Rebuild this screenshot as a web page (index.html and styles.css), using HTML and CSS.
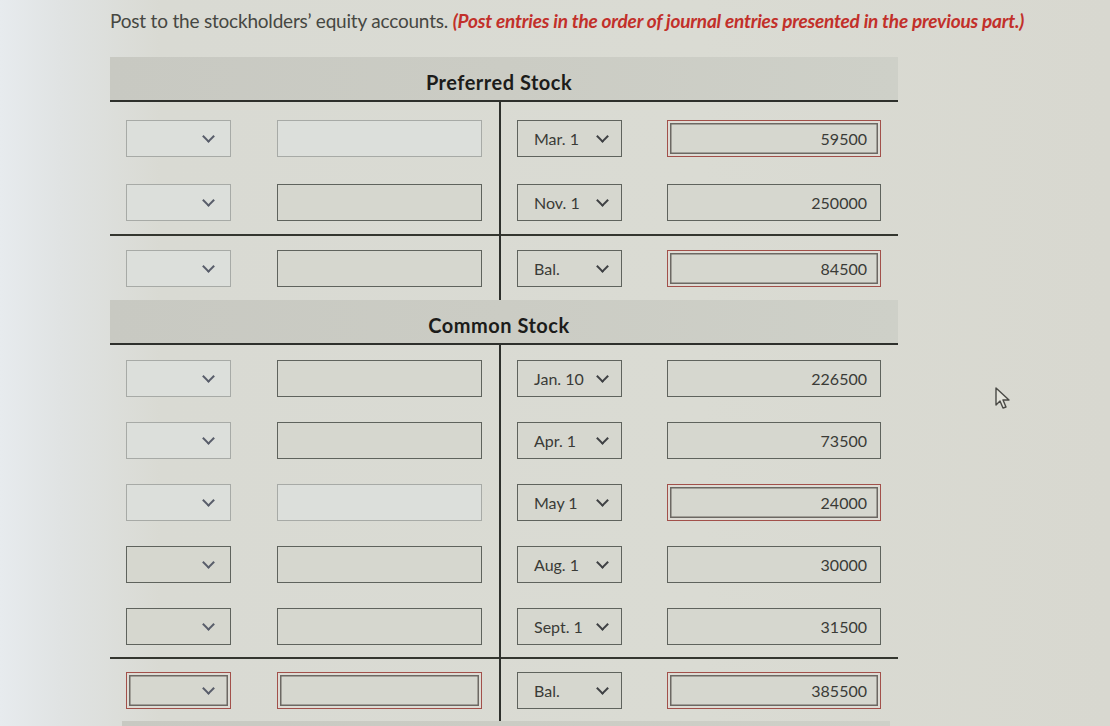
FILE: index.html
```html
<!DOCTYPE html>
<html>
<head>
<meta charset="utf-8">
<link rel="stylesheet" href="styles.css">
</head>
<body>
<div class="page">
  <p class="prompt">Post to the stockholders’ equity accounts. <span class="note">(Post entries in the order of journal entries presented in the previous part.)</span></p>

  <div class="ledger">
    <div class="head">Preferred Stock</div>
    <div class="body pref">
      <div class="row">
        <div class="half l"><div class="sel light"><span></span><i class="chev"></i></div><div class="inp light"></div></div>
        <div class="half r"><div class="sel"><span>Mar. 1</span><i class="chev"></i></div><div class="inp amt red">59500</div></div>
      </div>
      <div class="row">
        <div class="half l"><div class="sel light"><span></span><i class="chev"></i></div><div class="inp"></div></div>
        <div class="half r"><div class="sel"><span>Nov. 1</span><i class="chev"></i></div><div class="inp amt">250000</div></div>
      </div>
      <div class="rule"></div>
      <div class="row">
        <div class="half l"><div class="sel light"><span></span><i class="chev"></i></div><div class="inp"></div></div>
        <div class="half r"><div class="sel"><span>Bal.</span><i class="chev"></i></div><div class="inp amt red">84500</div></div>
      </div>
    </div>

    <div class="head">Common Stock</div>
    <div class="body common">
      <div class="row">
        <div class="half l"><div class="sel light"><span></span><i class="chev"></i></div><div class="inp"></div></div>
        <div class="half r"><div class="sel"><span>Jan. 10</span><i class="chev"></i></div><div class="inp amt">226500</div></div>
      </div>
      <div class="row">
        <div class="half l"><div class="sel light"><span></span><i class="chev"></i></div><div class="inp"></div></div>
        <div class="half r"><div class="sel"><span>Apr. 1</span><i class="chev"></i></div><div class="inp amt">73500</div></div>
      </div>
      <div class="row">
        <div class="half l"><div class="sel light"><span></span><i class="chev"></i></div><div class="inp light"></div></div>
        <div class="half r"><div class="sel"><span>May 1</span><i class="chev"></i></div><div class="inp amt red">24000</div></div>
      </div>
      <div class="row">
        <div class="half l"><div class="sel"><span></span><i class="chev"></i></div><div class="inp"></div></div>
        <div class="half r"><div class="sel"><span>Aug. 1</span><i class="chev"></i></div><div class="inp amt">30000</div></div>
      </div>
      <div class="row">
        <div class="half l"><div class="sel"><span></span><i class="chev"></i></div><div class="inp"></div></div>
        <div class="half r"><div class="sel"><span>Sept. 1</span><i class="chev"></i></div><div class="inp amt">31500</div></div>
      </div>
      <div class="rule"></div>
      <div class="row">
        <div class="half l"><div class="sel red"><span></span><i class="chev"></i></div><div class="inp red"></div></div>
        <div class="half r"><div class="sel"><span>Bal.</span><i class="chev"></i></div><div class="inp amt red">385500</div></div>
      </div>
    </div>
    <div class="head next"></div>
  </div>
</div>

<svg class="cursor" width="20" height="26" viewBox="0 0 20 26">
  <path d="M2 2 L2 19 L6 15 L9 22 L12 21 L9 14 L15 14 Z" fill="#e4e4dc" stroke="#4a4a46" stroke-width="1.4" stroke-linejoin="round"/>
</svg>
</body>
</html>
```

FILE: styles.css
```css
html, body {
  margin: 0;
  padding: 0;
  height: 100%;
  overflow: hidden;
}
body {
  background: linear-gradient(90deg, #e7ebee 0px, #e0e3e3 60px, #d9dad3 160px, #dadbd3 700px, #d8d8d0 1110px);
  font-family: Lato, "Open Sans", sans-serif;
  color: #3b3c38;
  position: relative;
}
.page {
  padding: 8px 0 0 110px;
}
.prompt {
  margin: 0;
  font-size: 19px;
  line-height: 26px;
  color: #464742;
  letter-spacing: -0.2px;
}
.note {
  color: #c2302a;
  font-weight: bold;
  font-style: italic;
}
.ledger {
  margin-top: 23px;
  width: 788px;
}
.head {
  height: 43px;
  background: linear-gradient(90deg, #c8c9c2 0%, #cbccc4 50%, #ced0c8 100%);
  border-bottom: 2px solid #2e302c;
  font-weight: bold;
  font-size: 20px;
  letter-spacing: 0.5px;
  color: #1c1c1a;
  text-align: center;
  line-height: 50px;
  padding-right: 10px;
  box-sizing: content-box;
}
.head.next {
  border-bottom: none;
  margin: 0 8px 0 12px;
  height: 20px;
}
.body {
  position: relative;
  padding-top: 4px;
}
.body::before {
  content: "";
  position: absolute;
  left: 389px;
  top: 0;
  bottom: 0;
  width: 1.5px;
  background: #2e302c;
}
.body.common {
  padding-top: 2px;
}
.row {
  display: flex;
  align-items: center;
  height: 64px;
}
.common .row {
  height: 62px;
}
.rule {
  height: 2px;
  background: #34362f;
}
.half {
  display: flex;
  align-items: center;
  box-sizing: border-box;
}
.half.l {
  width: 390px;
  padding-left: 16px;
  gap: 46px;
}
.half.r {
  width: 398px;
  padding-left: 17px;
  gap: 45px;
}
.sel, .inp {
  box-sizing: border-box;
  height: 37px;
  border: 1.5px solid #5f635d;
  background: #d6d7cf;
  position: relative;
  display: flex;
  align-items: center;
  font-size: 16px;
  color: #3a3b37;
}
.sel {
  width: 105px;
  padding-left: 16px;
}
.inp {
  width: 205px;
}
.half.r .inp {
  width: 214px;
}
.light {
  border-color: #a7aaa6;
  background: #dcdfdb;
}
.amt {
  justify-content: flex-end;
  padding-right: 13px;
}
.red {
  border: 1px solid #a2504a;
  box-shadow: inset 0 0 0 2px #dedcd5, inset 0 0 0 3.5px #6c6863;
}
.chev {
  position: absolute;
  right: 14px;
  top: 50%;
  width: 7px;
  height: 7px;
  margin-top: -6px;
  border-right: 2.5px solid #3f4144;
  border-bottom: 2.5px solid #3f4144;
  transform: rotate(45deg);
}
.half.l .chev {
  right: 17px;
  border-color: #585d6a;
}
.cursor {
  position: absolute;
  left: 994px;
  top: 386px;
}
```
